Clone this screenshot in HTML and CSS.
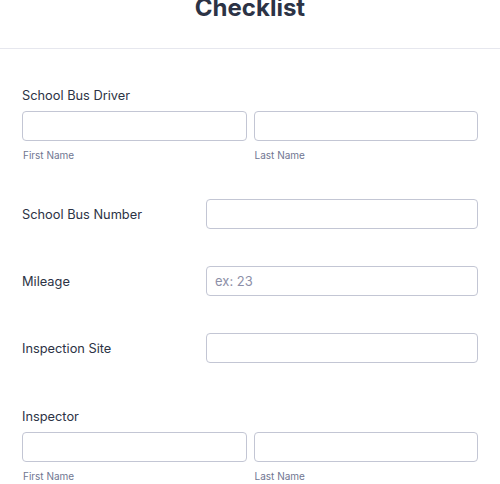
FILE: index.html
```html
<!DOCTYPE html>
<html lang="en">
<head>
    <meta charset="UTF-8">
    <meta name="viewport" content="width=device-width, initial-scale=1.0">
    <title>School Bus Checklist</title>
    <link rel="stylesheet" href="styles.css">
</head>
<body>
    <div class="form-header">
        <h1 class="form-title">Checklist</h1>
    </div>

    <form class="form">
        <div class="field field-stacked first">
            <label class="field-label">School Bus Driver</label>
            <div class="name-row">
                <div class="name-part">
                    <input type="text" class="input">
                    <span class="sublabel">First Name</span>
                </div>
                <div class="name-part">
                    <input type="text" class="input">
                    <span class="sublabel">Last Name</span>
                </div>
            </div>
        </div>

        <div class="field field-inline">
            <label class="field-label">School Bus Number</label>
            <input type="text" class="input input-side">
        </div>

        <div class="field field-inline">
            <label class="field-label">Mileage</label>
            <input type="text" class="input input-side" placeholder="ex: 23">
        </div>

        <div class="field field-inline">
            <label class="field-label">Inspection Site</label>
            <input type="text" class="input input-side">
        </div>

        <div class="field field-stacked">
            <label class="field-label">Inspector</label>
            <div class="name-row">
                <div class="name-part">
                    <input type="text" class="input">
                    <span class="sublabel">First Name</span>
                </div>
                <div class="name-part">
                    <input type="text" class="input">
                    <span class="sublabel">Last Name</span>
                </div>
            </div>
        </div>
    </form>
</body>
</html>
```

FILE: styles.css
```css
body {
    font-family: Inter, "Noto Sans", sans-serif;
    margin: 0;
    background-color: #fff;
    color: #2c3345;
    overflow: hidden;
}

.form-header {
    height: 49px;
    border-bottom: 1px solid #e6e7ee;
    box-sizing: border-box;
    display: flex;
    justify-content: center;
}

.form-title {
    margin: -7px 0 0;
    font-size: 24px;
    font-weight: 700;
    line-height: 30px;
    color: #2c3345;
}

.form {
    padding: 0 22px;
}

.field {
    margin-top: 37px;
}

.field.first {
    margin-top: 38px;
}

.field-stacked {
    margin-top: 45px;
}

.field-label {
    display: block;
    font-size: 12.8px;
    font-weight: 400;
    line-height: 16px;
}

.field-stacked .field-label {
    padding-top: 1px;
    margin-bottom: 7px;
}

.field-inline {
    display: flex;
    align-items: center;
}

.field-inline .field-label {
    width: 184px;
    flex-shrink: 0;
    padding-top: 2px;
}

.name-row {
    display: flex;
    gap: 7px;
}

.name-part {
    flex: 1;
    display: flex;
    flex-direction: column;
}

.input {
    height: 30px;
    box-sizing: border-box;
    border: 1px solid #c3c6d4;
    border-radius: 4px;
    padding: 0 8px;
    font-family: inherit;
    font-size: 13px;
    color: #2c3345;
    background: #fff;
    width: 100%;
}

.input::placeholder {
    color: #8d8fa8;
}

.input-side {
    flex: 1;
}

.sublabel {
    margin-top: 8px;
    margin-left: 1px;
    font-size: 10px;
    line-height: 13px;
    color: #6f7691;
}
```
